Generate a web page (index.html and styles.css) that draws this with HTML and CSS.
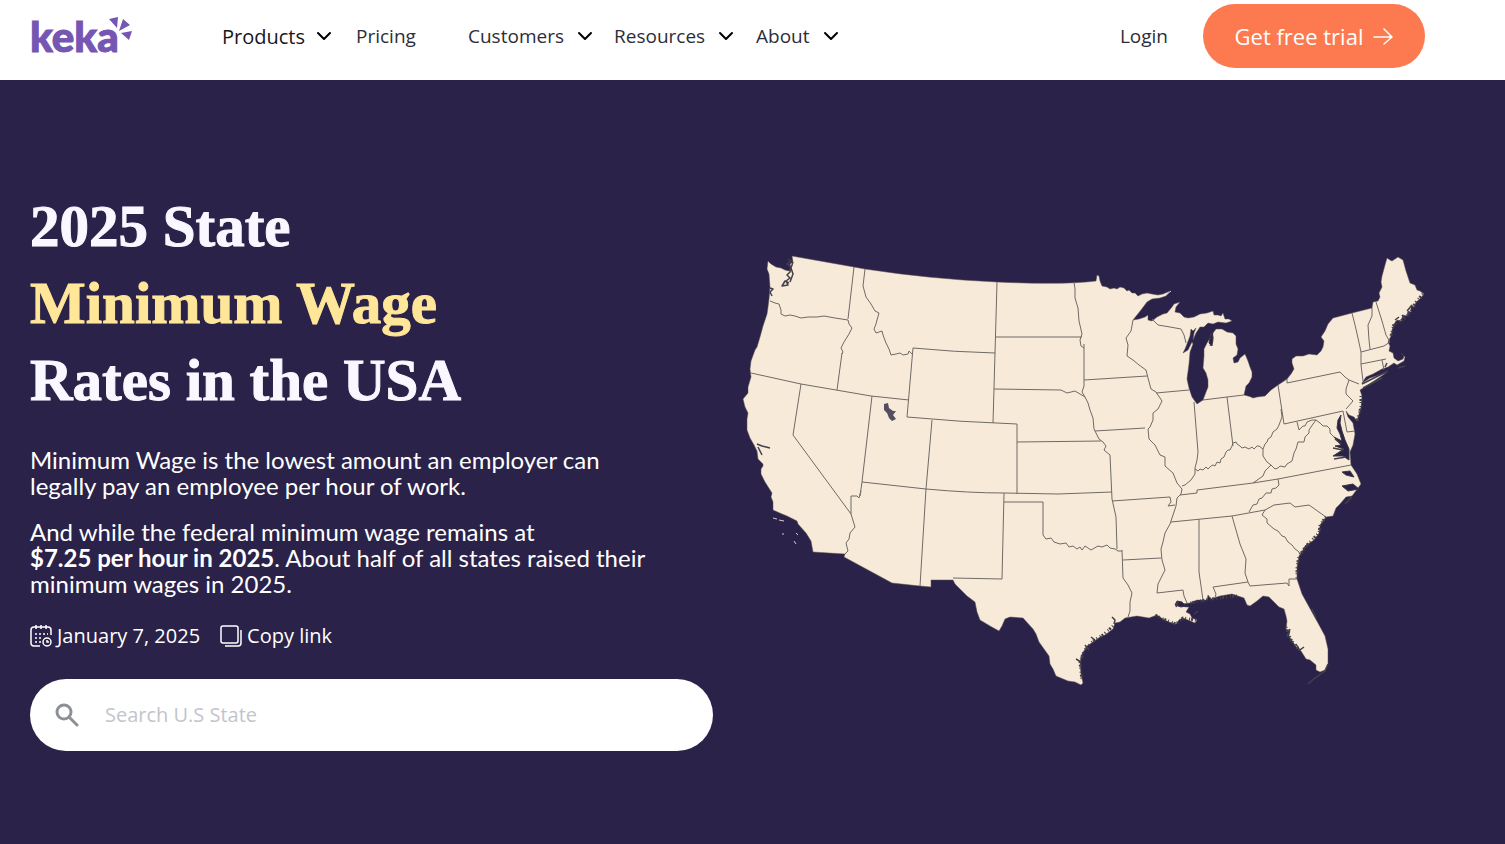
FILE: index.html
```html
<!doctype html>
<html lang="en">
<head>
    <meta charset="UTF-8">
    <meta name="viewport" content="width=device-width, initial-scale=1.0">
    <title>2025 State Minimum Wage Rates in the USA | Keka</title>
    <link rel="stylesheet" href="styles.css">
</head>
<body>
    <header class="site-header">
        <a class="logo" href="#" aria-label="keka home">
            <span class="logo-text">keka</span>
            <svg class="logo-spark" viewBox="0 0 24 24" aria-hidden="true">
                <path d="M0 3 9 1 8 12ZM14 3 21 9 10 15ZM12 17 23 15 20 24Z"/>
            </svg>
        </a>

        <nav class="main-nav">
            <a class="active" href="#">Products <svg class="chevron" viewBox="0 0 16 10"><path d="M2 2l6 6 6-6"/></svg></a>
            <a href="#">Pricing</a>
            <a href="#">Customers <svg class="chevron" viewBox="0 0 16 10"><path d="M2 2l6 6 6-6"/></svg></a>
            <a href="#">Resources <svg class="chevron" viewBox="0 0 16 10"><path d="M2 2l6 6 6-6"/></svg></a>
            <a href="#">About <svg class="chevron" viewBox="0 0 16 10"><path d="M2 2l6 6 6-6"/></svg></a>
        </nav>

        <a class="login" href="#">Login</a>
        <button class="trial" type="button">Get free trial
            <svg class="arrow" viewBox="0 0 20 18" aria-hidden="true"><path d="M1 10h18M11 2l8 8-8 7"/></svg>
        </button>
    </header>

    <main class="hero">
        <div class="intro">
            <h1>2025 State<br><span>Minimum Wage</span><br>Rates in the USA</h1>
            <p>Minimum Wage is the lowest amount an employer can<br>legally pay an employee per hour of work.</p>
            <p>And while the federal minimum wage remains at<br><strong>$7.25 per hour in 2025</strong>. About half of all states raised their<br>minimum wages in 2025.</p>

            <div class="meta">
                <span class="meta-item">
                    <svg viewBox="0 0 22 22" aria-hidden="true">
                        <path d="M10 21H4a3 3 0 0 1-3-3V5a3 3 0 0 1 3-3h14a3 3 0 0 1 3 3v5M6 0v4M11 0v4M16 0v4"/>
                        <path stroke-dasharray="2 2" d="M5 9h13M5 13h8M5 17h6"/>
                        <circle cx="17" cy="17" r="4"/>
                        <path d="M17 15v2h2"/>
                    </svg>
                    <time datetime="2025-01-07">January 7, 2025</time>
                </span>
                <button class="meta-item" type="button">
                    <svg class="copy" viewBox="0 0 22 22" aria-hidden="true">
                        <rect x="1" y="1" width="17" height="17" rx="2"/>
                        <path d="M21 5v13a3 3 0 0 1-3 3H5"/>
                    </svg>
                    Copy link
                </button>
            </div>

            <div class="search">
                <svg viewBox="0 0 24 24" aria-hidden="true"><circle cx="9" cy="9" r="7"/><path d="M14 14l8 8"/></svg>
                <input type="text" placeholder="Search U.S State" aria-label="Search U.S State">
            </div>
        </div>

        <svg class="map" viewBox="740 250 685 440" role="img" aria-label="Map of the United States">
            <!-- Mainland -->
            <path class="land" d="M768 262 771 265 776 268 781 269 785 271 789 272 791 270 790 265 793 263 792 257
                854 268 865 270Q930 280 997 283T1096 282L1097 276 1099 277 1100 282 1102 287 1107 288 1110 290 1114 289 1117 290 1120 288 1124 289 1127 292 1129 291 1132 294 1135 294 1138 297 1142 295 1147 294 1152 295 1158 296 1163 295 1170 292 1166 297 1160 299
                1152 300 1147 303 1141 311 1133 321 1139 320 1145 318 1148 316 1148 321 1152 322 1157 318 1163 315 1167 314 1172 308 1174 305 1180 303 1176 308 1175 313 1180 314 1184 318 1188 319 1194 318 1200 315 1207 314 1213 312 1214 316 1218 316 1221 317 1223 314 1225 320 1229 320 1232 322
                1226 324 1218 323 1213 325 1208 324 1204 328 1200 328 1196 334 1193 341 1194 334 1196 329 1193 332 1191 330 1190 337 1187 345 1185 350 1183 354 1188 351 1192 343 1193 345 1190 353 1189 365 1187 380 1189 389 1192 398 1197 405 1203 401 1206 393 1208 388 1208 381 1206 374 1203 369
                1204 357 1204 350 1207 344 1210 339 1210 347 1213 343 1213 334 1216 330 1222 330 1227 333 1233 334 1236 337 1236 345 1238 350 1237 356 1233 359 1234 364 1238 363 1240 359 1245 355 1248 362 1250 368 1252 373 1252 378 1249 384 1246 387 1244 396 1248 397 1251 398 1253 399 1257 398 1265 397 1271 391
                1278 386 1287 380 1291 375 1294 370 1292 364 1292 360 1296 357 1303 357 1309 355 1317 356 1321 352 1323 348 1324 342 1321 338 1325 332 1328 325 1333 319 1352 314 1372 309 1373 303 1378 302 1380 298 1379 294 1382 288 1381 283 1382 277 1385 266 1387 259 1390 261 1392 262 1395 260 1398 258 1403 261
                1406 272 1410 284 1415 286 1417 291 1420 292 1424 295 1420 300 1416 303 1414 308 1411 306 1411 313 1408 312 1407 317 1403 316 1401 322 1397 321 1394 325 1392 331 1391 337 1388 343 1390 347 1389 352 1393 354 1394 359 1398 362 1403 360 1404 357 1401 354 1405 358 1404 362 1397 366 1394 364 1388 368 1382 370
                1373 375 1366 378 1362 384 1370 379 1379 376 1386 374 1377 380 1368 386 1360 391 1362 397 1361 408 1357 422 1354 418 1349 416 1346 412 1348 418 1353 424 1355 435 1353 446 1350 453 1351 466 1357 475 1361 485 1352 497 1346 498 1340 505 1336 509 1333 517 1326 518 1320 526 1319 534 1314 541 1308 545
                1303 551 1299 557 1297 568 1297 580 1302 595 1313 615 1318 624 1325 637 1328 650 1328 665 1325 671 1320 673 1316 671 1316 666 1310 661 1306 660 1301 652 1297 649 1293 643 1289 637 1290 632 1286 630 1287 622 1286 617 1284 610 1279 608 1273 602 1269 598 1263 597 1257 602 1250 607 1247 606 1244 599 1238 597
                1232 595 1220 597 1211 600 1208 596 1207 601 1197 601 1190 604 1181 605 1185 608 1189 608 1186 613 1190 615 1192 619 1197 621 1195 624 1188 621 1183 619 1179 621 1176 625 1169 623 1163 620 1157 616 1149 619 1137 617 1125 619 1120 623 1115 624 1113 630 1105 636 1100 638 1093 643 1087 647 1082 655 1080 663 1081 675 1083 684 1081 686
                1075 683 1068 682 1056 677 1053 670 1050 665 1049 657 1044 650 1039 643 1036 635 1033 630 1023 619 1010 618 1005 620 1002 627 999 632 990 627 980 621 977 613 975 603 967 597 961 591 955 585 953 581 931 581 931 588 920 587 892 584 844 558 845 555 813 553 811 542 806 534 798 525 797 522 787 517
                782 515 773 511 773 503 771 498 772 494 765 483 761 475 761 470 763 467 763 465 758 460 757 452 754 446 750 439 747 431 747 420 748 414 745 408 743 400 748 394 748 388 751 378 750 370 751 362 755 351 757 348 760 338 763 327 767 315 768 308 769 300 770 288 769 275 767 270Z"/>

            <!-- Straight borders -->
            <path class="border" d="M854 268 848 320M837 391 842 354M865 270 863 287M751 374 801 385 871 397 909 401M801 385 793 436 851 515M872 397 862 483 860 497M862 483 926 490Q970 494 1004 494L1058 495 1112 493
                M913 349Q955 353 995 354M913 349 907 418Q960 423 1017 425L1017 495M932 421 926 490 920 587M997 283 995 354 993 424M996 338H1082M994 390 1061 391M1017 443 1101 442
                M1004 494 1002 580 953 579M1004 503H1043V536M1074 283 1075 290M1084 345 1084 381 1147 377M1095 432 1145 429M1110 456 1112 500 1116 518 1117 550M1112 502 1170 498M1122 551 1123 579M1123 561 1161 559
                M1156 394 1189 391M1194 403 1198 453M1203 401 1227 398 1244 396M1227 398 1233 447M1278 386 1284 425 1343 412M1287 380 1287 384 1340 373M1171 523 1232 517 1265 511M1180 496 1197 494 1197 491 1253 484 1278 480 1351 466
                M1199 520 1199 573 1203 601M1232 517 1240 545 1246 560M1213 588 1248 583 1250 587 1287 584 1289 587 1289 580 1297 580M1157 594 1183 591M1361 353 1384 347 1390 343M1361 365 1386 360M1382 361 1384 371M1361 353 1361 366 1363 382M1343 412 1347 433 1355 432"/>

            <!-- Rivers and ridges -->
            <path class="border" d="M770 302 775 304 779 305 781 311 781 315 785 317 790 316 795 317 801 319 808 318 817 318 824 317 835 319 848 321 849 325 852 329 849 335 844 343 841 349 843 353 842 355
                M863 287 866 298 871 305 875 312 879 314 877 321 876 325 874 330 876 334 882 332 883 336 886 344 889 350 891 356 896 355 900 354 903 356 908 355 909 352 912 355
                M851 515 851 497 857 497 859 499 861 492M851 515 855 528 850 534 849 540 846 544 848 552 845 555
                M1075 290 1075 299 1078 309 1079 322 1082 335 1080 341 1081 347 1084 349M1061 391 1067 394 1075 392 1080 395 1085 398 1088 404 1090 411 1093 419 1094 430 1099 440 1103 443 1106 447 1104 451 1110 456M1084 381 1084 387 1082 393 1085 398
                M1133 321 1131 332 1126 339 1128 346 1127 357 1133 361 1139 366 1146 371 1148 379 1151 390 1156 393 1162 402 1158 410 1153 414 1153 421 1150 428 1148 430 1149 440 1155 446 1160 456 1165 458 1165 467 1173 474 1177 484 1182 490 1181 495 1177 499 1176 507 1172 519 1170 525 1165 534 1163 543 1161 550 1162 561 1165 571 1161 579 1158 585 1157 594
                M1152 320 1158 326 1170 328 1181 330 1184 336 1186 344M1198 453 1197 461 1195 469 1195 475 1191 481 1185 486 1182 487M1195 470 1198 472 1200 470 1203 471 1206 468 1208 470 1211 467 1213 466 1215 467 1217 463 1220 464 1221 460 1224 458 1226 453 1228 451 1230 451 1232 447 1233 444 1236 443 1237 445 1240 447 1242 449 1245 448 1249 450 1252 448 1254 450 1257 447 1259 447 1263 450 1265 445 1267 443 1268 440 1271 438 1273 433 1277 430 1279 426 1282 418 1281 410
                M1263 450 1263 457 1267 463 1271 466 1275 470 1278 469 1280 467 1285 468 1287 465 1292 462 1294 454 1296 450 1298 443 1304 443 1305 438 1309 434 1309 431 1313 425 1316 421 1320 424 1323 427 1327 427 1330 430 1330 434 1335 439 1341 444M1297 423 1299 431 1303 427 1305 427 1307 423 1312 421 1316 421M1271 466 1265 472 1263 477 1253 484
                M1278 480 1279 486 1276 489 1272 490 1271 494 1266 494 1262 499 1259 500 1257 505 1253 506 1249 513M1265 511 1262 516 1267 520 1267 524 1274 530 1278 532 1282 537 1285 538 1288 543 1292 546 1295 550 1298 552 1301 556M1265 511 1274 506 1290 504 1295 508 1309 506 1326 518
                M1170 498 1171 503 1168 507 1175 506M1043 536 1046 540 1051 539 1054 543 1060 545 1066 544 1069 548 1073 547 1077 550 1080 548 1082 551 1085 547 1091 551 1098 547 1102 548 1107 546 1110 549 1115 550 1118 552 1122 552M1123 579 1128 586 1132 594 1130 603 1130 612 1128 618
                M1183 591 1184 597 1187 604M1246 560 1245 574 1248 583M1213 588 1216 595 1215 599M1352 314 1355 326 1358 339 1361 353M1372 309 1372 317 1368 326 1369 341 1370 350M1376 303 1382 322 1386 336 1390 343M1340 373 1345 378 1349 381 1346 390 1346 395 1353 402 1346 410M1349 381 1359 385"/>

            <!-- Inlets, lakes and islands -->
            <path class="water" d="M1341 416 1338 421 1337 429 1340 435 1342 442 1334 438 1341 446 1335 447 1344 450 1333 457 1343 457 1349 461 1349 450 1345 441 1342 432 1340 424ZM1211 334 1209 344 1212 347 1213 338ZM1177 602 1175 606 1181 608 1186 607 1182 603ZM1342 473 1350 472 1354 478 1346 476ZM1342 487 1353 485 1359 490 1348 492Z"/>
            <path class="coast" d="M788 260 791 262 787 265 791 268 790 273 787 276 790 279 786 282 788 286 782 287 785 282 789 284M793 263l-2 6 2 6-3 8M770 289l3 1-3 3 2 4M757 445l5 2 8 2M758 448l4 8M1112 618l3 3-1 4M1091 638l4 3M1085 646l4 5M1076 660l5 3M1178 603l-2 5M1395 321l4-3M1402 316l3 4M1407 312l5-6M1290 630l-3 8M1296 645l4 7M1300 651l4-3M1312 610l4 9M1303 550l5-5M1362 385l26-13M1363 389l19-10M1385 368l2-4M1398 369l7-2M1328 665l-3 7-10 7-7 6M1345 505l7-7M1335 440l6 5M1333 449l10 2M1334 460l12-2M1194 615l4-3"/>
            <path class="shore" d="M1423 295 1416 303 1412 310 1407 317 1401 322 1394 325 1391 337M1326 518 1320 526 1319 534 1308 545 1299 557 1297 568 1297 580M1113 627 1103 636 1093 642 1084 652 1080 663 1082 682M1286 628 1291 641 1301 653M1237 597 1211 600 1190 604M1196 621 1183 619 1176 625 1163 620 1155 616M1361 397 1361 408 1357 422"/>
            <path class="lake" d="M884 405 888 404 889 409 893 412 896 412 893 416 896 420 892 422 889 419 887 414 884 411Z"/>
            <path class="island" d="M773 519l4 1M779 521l5 1M782 535h2M796 534l2 2M794 542l2 3M1166 296l5-4"/>
        </svg>
    </main>
</body>
</html>
```
FILE: styles.css
```css
* {
    box-sizing: border-box;
}
body {
    margin: 0;
    min-height: 100vh;
    display: flex;
    flex-direction: column;
    font-family: "Open Sans", "Noto Sans", sans-serif;
    font-size: 19px;
    color: #2d2d38;
    background: #2b2249;
}
a {
    color: inherit;
    text-decoration: none;
}
button {
    border: none;
    font: inherit;
    cursor: pointer;
}

/* Header */
.site-header {
    display: flex;
    align-items: center;
    height: 80px;
    padding: 0 80px 8px 30px;
    background: #fff;
}
.logo {
    position: relative;
    width: 192px;
    color: #7556b2;
}
.logo-text {
    font-family: Lato, sans-serif;
    font-size: 42px;
    font-weight: 900;
    line-height: 48px;
    -webkit-text-stroke: 1px #7556b2;
}
.logo-spark {
    position: absolute;
    left: 79px;
    top: 4px;
    width: 24px;
    height: 24px;
    fill: currentColor;
}
.main-nav {
    display: grid;
    grid-template-columns: 134px 112px 146px 142px auto;
}
.main-nav a {
    display: flex;
    align-items: center;
    gap: 13px;
}
.main-nav .active {
    gap: 11px;
    font-size: 20px;
    color: #16161d;
}
.chevron {
    width: 16px;
    height: 10px;
    fill: none;
    stroke: #000;
    stroke-width: 2;
    stroke-linecap: round;
    stroke-linejoin: round;
}
.login {
    margin-left: auto;
}
.trial {
    display: flex;
    align-items: center;
    justify-content: center;
    gap: 10px;
    width: 222px;
    height: 64px;
    margin-left: 35px;
    padding: 0;
    border-radius: 32px;
    background: #fd7a50;
    color: #fff;
    font-size: 22px;
}
.arrow {
    width: 20px;
    height: 18px;
    fill: none;
    stroke: currentColor;
    stroke-width: 1.5;
    stroke-linecap: round;
}

/* Hero */
.hero {
    flex: 1;
    display: grid;
    grid-template-columns: 683fr 685fr;
    gap: 27px;
    align-items: center;
    padding: 98px 80px 84px 30px;
    color: #fff;
}
.intro {
    font-family: Lato, sans-serif;
    font-size: 24px;
    line-height: 26px;
}
h1 {
    margin: 0 0 28px;
    font-family: "Liberation Serif", serif;
    font-size: 59px;
    font-weight: bold;
    line-height: 77px;
    color: #f9f7ff;
    -webkit-text-stroke: 1px currentColor;
}
h1 span {
    color: #ffe699;
}
p {
    margin: 0 0 20px;
    white-space: nowrap;
}
.meta {
    display: flex;
    gap: 20px;
    margin: 26px 0 30px;
    font-family: "Open Sans", sans-serif;
    font-size: 20px;
}
.meta-item {
    display: flex;
    align-items: center;
    gap: 5px;
    padding: 0;
    background: none;
    color: #fff;
}
.meta-item svg {
    width: 22px;
    height: 22px;
    fill: none;
    stroke: currentColor;
    stroke-width: 1.5;
}
.search {
    display: flex;
    align-items: center;
    height: 72px;
    padding: 0 25px;
    border-radius: 36px;
    background: #fff;
}
.search svg {
    width: 24px;
    height: 24px;
    fill: none;
    stroke: #8d9097;
    stroke-width: 3;
    stroke-linecap: round;
}
.search input {
    flex: 1;
    margin-left: 26px;
    padding: 0;
    border: none;
    outline: none;
    background: none;
    font-family: "Open Sans", sans-serif;
    font-size: 20px;
    color: #2d2d38;
}
.search input::placeholder {
    color: #c1c5cb;
}

/* Map */
.map {
    width: 100%;
    overflow: visible;
    stroke-linejoin: round;
}
.land {
    fill: #f7ead8;
    stroke: #55504f;
    stroke-width: 0.5;
}
.border {
    fill: none;
    stroke: #6f6a66;
}
.water {
    fill: #2b2249;
    stroke: #3c3744;
}
.coast {
    fill: none;
    stroke: #44404a;
    stroke-width: 1.5;
}
.shore {
    fill: none;
    stroke: #44404a;
    stroke-width: 3;
    stroke-dasharray: 1 2 2 1 1 3;
}
.lake {
    fill: #554e63;
}
.island {
    fill: none;
    stroke: #d8ccc0;
}
```
